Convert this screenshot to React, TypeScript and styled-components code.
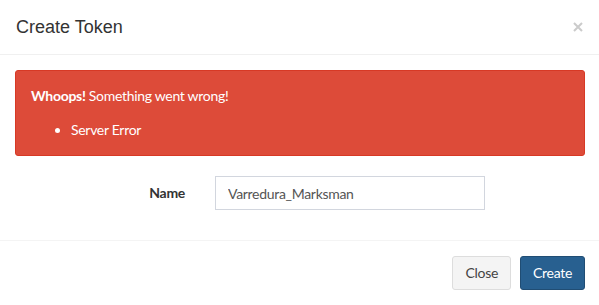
import React from "react";
import styled, { createGlobalStyle } from "styled-components";

const Global = createGlobalStyle`
  html, body { margin: 0; padding: 0; background: #fff; overflow: hidden; }
  body { font-family: "Lato", "Noto Sans", sans-serif; font-size: 14px; color: #333; letter-spacing: -0.3px; }
  * { box-sizing: border-box; }
`;

const Modal = styled.div`
  width: 600px;
  background: #fff;
`;

const Header = styled.div`
  display: flex;
  align-items: center;
  justify-content: space-between;
  height: 55px;
  padding: 0 15px 0 16px;
  border-bottom: 1px solid #f0f0f0;
`;

const Title = styled.h4`
  margin: 0;
  font-family: "Liberation Sans", Arial, sans-serif;
  font-size: 18px;
  font-weight: 400;
  line-height: 24px;
  letter-spacing: 0;
  color: #333;
  padding-bottom: 1px;
`;

const CloseX = styled.button`
  border: 0;
  background: transparent;
  padding: 0;
  margin-right: 1px;
  width: 12px;
  height: 12px;
  display: flex;
  align-items: center;
  justify-content: center;
  cursor: pointer;
  opacity: 0.2;
`;

const Body = styled.div`
  padding: 15px;
`;

const Alert = styled.div`
  background: #dd4b39;
  border: 1px solid #d73925;
  border-radius: 3px;
  color: #fff;
  padding: 15px;
  margin-bottom: 20px;
  line-height: 20px;
`;

const AlertText = styled.div``;

const AlertList = styled.ul`
  margin: 14px 0 0;
  padding-left: 40px;
`;

const FormRow = styled.div`
  display: grid;
  grid-template-columns: 200px 300px;
  margin: 0 -15px 15px;
`;

const Label = styled.label`
  text-align: right;
  font-weight: 700;
  padding: 7px 15px 0;
  line-height: 20px;
`;

const InputWrap = styled.div`
  padding: 0 15px;
`;

const Input = styled.input`
  width: 100%;
  height: 34px;
  border: 1px solid #d2d6de;
  border-radius: 0;
  padding: 6px 12px;
  font-family: inherit;
  font-size: 14px;
  letter-spacing: inherit;
  color: #555;
  outline: none;
`;

const Footer = styled.div`
  border-top: 1px solid #f4f4f4;
  padding: 15px;
  display: flex;
  justify-content: flex-end;
  gap: 9px;
`;

const Button = styled.button<{ $primary?: boolean }>`
  height: 34px;
  padding: 6px 12px;
  font-family: inherit;
  font-size: 14px;
  letter-spacing: inherit;
  line-height: 20px;
  border-radius: 3px;
  border: 1px solid ${(p) => (p.$primary ? "#204d74" : "#ddd")};
  background: ${(p) => (p.$primary ? "#286090" : "#f4f4f4")};
  color: ${(p) => (p.$primary ? "#fff" : "#444")};
  cursor: pointer;
`;

export default function App() {
  return (
    <>
      <Global />
      <Modal>
        <Header>
          <Title>Create Token</Title>
          <CloseX aria-label="Close">
            <svg width="10" height="10" viewBox="0 0 10 10">
              <path d="M1 1L9 9M9 1L1 9" stroke="#000" strokeWidth="2" />
            </svg>
          </CloseX>
        </Header>
        <Body>
          <Alert>
            <AlertText>
              <strong>Whoops!</strong> Something went wrong!
            </AlertText>
            <AlertList>
              <li>Server Error</li>
            </AlertList>
          </Alert>
          <FormRow>
            <Label htmlFor="name">Name</Label>
            <InputWrap>
              <Input id="name" defaultValue="Varredura_Marksman" />
            </InputWrap>
          </FormRow>
        </Body>
        <Footer>
          <Button>Close</Button>
          <Button $primary>Create</Button>
        </Footer>
      </Modal>
    </>
  );
}
